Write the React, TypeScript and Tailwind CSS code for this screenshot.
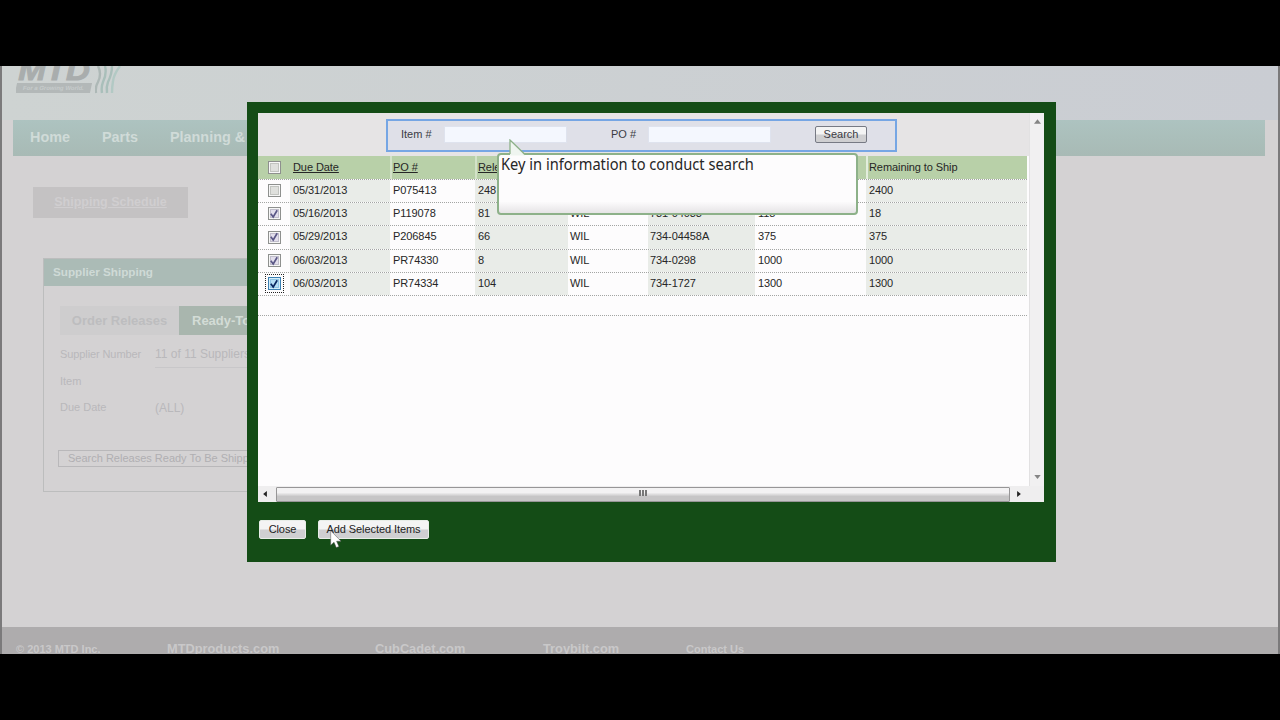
import React, { useState } from 'react';

interface Release {
    dueDate: string;
    po: string;
    release: string;
    plant: string;
    item: string;
    quantity: string;
    remaining: string;
    height: string;
}

const releases: Release[] = [
    { dueDate: '05/31/2013', po: 'P075413', release: '248', plant: '', item: '', quantity: '', remaining: '2400', height: 'h-[23px]' },
    { dueDate: '05/16/2013', po: 'P119078', release: '81', plant: 'WIL', item: '731-04033', quantity: '118', remaining: '18', height: 'h-[23px]' },
    { dueDate: '05/29/2013', po: 'P206845', release: '66', plant: 'WIL', item: '734-04458A', quantity: '375', remaining: '375', height: 'h-6' },
    { dueDate: '06/03/2013', po: 'PR74330', release: '8', plant: 'WIL', item: '734-0298', quantity: '1000', remaining: '1000', height: 'h-[23px]' },
    { dueDate: '06/03/2013', po: 'PR74334', release: '104', plant: 'WIL', item: '734-1727', quantity: '1300', remaining: '1300', height: 'h-[23px]' },
];

const columns = 'grid grid-cols-[32px_100px_85px_93px_80px_107px_111px_161px]';

const Checkbox: React.FC<{ checked: boolean; focused?: boolean; onClick: () => void }> = ({ checked, focused, onClick }) => (
    <button
        type="button"
        onClick={onClick}
        className={`flex h-[19px] w-[19px] items-center justify-center ${focused ? 'outline-1 -outline-offset-1 outline-dotted outline-[#222]' : ''}`}
    >
        <span className={`flex h-[13px] w-[13px] items-center justify-center border p-px ${focused ? 'border-[#3c7fb1] bg-[#d3edfa]' : 'border-[#8e908e] bg-[#f6f6f6]'}`}>
            <span className={`flex h-[9px] w-[9px] items-center justify-center border ${focused ? 'border-[#8fc4e6] bg-[#b5def5]' : checked ? 'border-[#c0bdcb] bg-[#e2deec]' : 'border-[#c2c4c0] bg-[#dfe0dd]'}`}>
                {checked && (
                    <svg viewBox="0 0 10 10" className={`h-[10px] w-[10px] shrink-0 ${focused ? 'text-[#08265f]' : 'text-[#5a5786]'}`}>
                        <path d="M1.8 4.8 4.2 8 8.2 1.2" fill="none" stroke="currentColor" strokeWidth="1.7" />
                    </svg>
                )}
            </span>
        </span>
    </button>
);

const PushButton: React.FC<{ children: React.ReactNode; className: string }> = ({ children, className }) => (
    <button
        type="button"
        className={`flex items-center justify-center rounded-[2px] border bg-linear-to-b from-[#f4f4f4] from-45% to-[#cfcfd1] to-55% whitespace-nowrap ${className}`}
    >
        {children}
    </button>
);

const Logo: React.FC = () => (
    <div className="flex h-[28px] overflow-hidden">
        <div className="w-[79px]">
            <div className="-mt-[8px] h-[25px] origin-left scale-x-[1.14] pl-[2px] text-[29px] leading-[24px] font-bold text-[#a9adad] italic [-webkit-text-stroke:1px_#a9adad]">MTD</div>
            <div className="h-[10px] w-[75px] -skew-x-12 bg-[#b3b8b8] text-center text-[6px] leading-[10px] font-bold text-[#c6cbcb]">For a Growing World.</div>
        </div>
        <svg viewBox="0 0 28 28" className="h-[28px] w-[28px]">
            <g fill="none" strokeWidth="2.4">
                <path d="M3 0Q7 8 3 16Q0 21 1 27" stroke="#adb8b6" />
                <path d="M10 0Q12 8 8 16Q6 21 7 27" stroke="#a9bfba" />
                <path d="M17 0Q17 8 13 16Q11 21 12 27" stroke="#a9bfba" />
                <path d="M25 0Q19 8 18 15Q17 21 17 27" stroke="#b2c9c4" />
            </g>
        </svg>
    </div>
);

const BackgroundPage: React.FC = () => (
    <div className="flex h-full flex-col">
        <div className="h-[54px] bg-linear-to-r from-[#ced3d2] to-[#cacdd3] pl-[16px]">
            <Logo />
        </div>
        <nav className="mr-[15px] ml-[13px] flex h-[36px] items-center gap-[32px] bg-linear-to-b from-[#adc3c0] to-[#a8bab5] pl-[17px] text-[14.4px] font-bold text-[#d0dbd8]">
            <span>Home</span>
            <span>Parts</span>
            <span className="whitespace-nowrap">Planning &amp;</span>
        </nav>
        <div className="mt-[31px] ml-[33px] flex h-[31px] w-[155px] items-center justify-center bg-[#c4c2c3] text-[12.5px] font-bold text-[#d0ced0] underline">
            Shipping Schedule
        </div>
        <section className="mt-[40px] ml-[43px] h-[234px] w-[620px] border border-[#bcbdbd]">
            <div className="flex h-[27px] items-center bg-[#abbbb6] pb-[2px] pl-[9px] text-[11.7px] font-bold text-[#cfdad6]">Supplier Shipping</div>
            <div className="pl-[16px] text-[11px] text-[#b9b8bb]">
                <div className="mt-[20px] flex h-[29px] text-[13px] font-bold">
                    <span className="flex w-[119px] items-center justify-center bg-[#cecdce] text-[#bdbdbf]">Order Releases</span>
                    <span className="flex w-[150px] items-center bg-[#a9b6ae] pl-[13px] text-[#d3dcd6]">Ready-To-Ship</span>
                </div>
                <div className="mt-[6px] flex h-[27px] items-center">
                    <span className="w-[95px] tracking-[-0.1px]">Supplier Number</span>
                    <span className="flex h-full w-[200px] items-center border-b border-[#c8c7c9] text-[12px]">11 of 11 Suppliers</span>
                </div>
                <div className="flex h-[26px] items-center">Item</div>
                <div className="flex h-[27px] items-center">
                    <span className="w-[95px]">Due Date</span>
                    <span className="text-[12px]">(ALL)</span>
                </div>
                <div className="mt-[29px] -ml-[2px] flex h-[17px] w-[220px] items-center border border-[#b9b8ba] pl-[9px] text-[11px] whitespace-nowrap text-[#b0afb2]">
                    Search Releases Ready To Be Shipped
                </div>
            </div>
        </section>
        <footer className="mt-auto flex h-[27px] bg-[#aeacad] pt-[13px] pl-[16px] text-[12.8px] leading-[18px] font-bold text-[#c9c8c9]">
            <span className="w-[151px] text-[11px]">© 2013 MTD Inc.</span>
            <span className="w-[208px]">MTDproducts.com</span>
            <span className="w-[168px]">CubCadet.com</span>
            <span className="w-[143px]">Troybilt.com</span>
            <span className="text-[11px]">Contact Us</span>
        </footer>
    </div>
);

const SearchBar: React.FC = () => (
    <div className="flex h-[43px] w-[771px] bg-[#e6e4e5] pt-[6px] pl-[128px]">
        <div className="flex h-[33px] w-[511px] items-center border-2 border-[#76a6e4] bg-[#dfe0e8] pb-[2px] pl-[13px] text-[#3c3c44]">
            <label className="w-[43px]">Item #</label>
            <input className="h-[17px] w-[123px] border border-[#dfe3ee] bg-[#f4f7fe]" />
            <label className="ml-[44px] w-[37px]">PO #</label>
            <input className="h-[17px] w-[123px] border border-[#dfe3ee] bg-[#f4f7fe]" />
            <PushButton className="ml-[44px] h-[17px] w-[52px] border-[#777a84]">Search</PushButton>
        </div>
    </div>
);

const ReleaseTable: React.FC = () => {
    const [selected, setSelected] = useState<boolean[]>([false, true, true, true, true]);

    const toggle = (index: number) => {
        setSelected(prev => prev.map((value, i) => (i === index ? !value : value)));
    };

    return (
        <div className="w-[769px] tracking-[-0.08px] text-[#262626]">
            <div className={`${columns} h-[23px] items-stretch bg-[#b8d0a8] leading-[22px]`}>
                <div className="flex items-center justify-center">
                    <Checkbox checked={selected.every(Boolean)} onClick={() => setSelected(releases.map(() => true))} />
                </div>
                <div className="pl-[3px] underline">Due Date</div>
                <div className="border-l-2 border-[#d3e2c8] pl-[1px] underline">PO #</div>
                <div className="border-l-2 border-[#d3e2c8] pl-[1px] underline">Rele</div>
                <div className="border-l-2 border-[#d3e2c8]" />
                <div className="border-l-2 border-[#d3e2c8]" />
                <div className="border-l-2 border-[#d3e2c8]" />
                <div className="border-l-2 border-[#e3eddc] pl-[1px]">Remaining to Ship</div>
            </div>
            {releases.map((row, index) => (
                <div key={index} className={`${columns} ${row.height} border-t border-dotted border-[#a3a5a3] leading-[20px]`}>
                    <div className="flex items-center justify-center pb-px">
                        <Checkbox checked={selected[index]} focused={index === 4} onClick={() => toggle(index)} />
                    </div>
                    <div className="bg-[#e9ece8] pl-[3px]">{row.dueDate}</div>
                    <div className="pl-[3px]">{row.po}</div>
                    <div className="bg-[#e9ece8] pl-[3px]">{row.release}</div>
                    <div className="pl-[2px]">{row.plant}</div>
                    <div className="bg-[#e9ece8] pl-[2px]">{row.item}</div>
                    <div className="pl-[3px]">{row.quantity}</div>
                    <div className="bg-[#e9ece8] pl-[3px]">{row.remaining}</div>
                </div>
            ))}
            <div className="h-[21px] border-y border-dotted border-[#a3a5a3]" />
        </div>
    );
};

const Callout: React.FC = () => (
    <div className="absolute top-[139px] left-[497px] h-[76px] w-[361px]">
        <div className="mt-[14px] h-[62px] rounded-[4px] border-2 border-[#8db189] bg-linear-to-b from-[#fdfcfd] from-80% to-[#e6e4e6] pl-[2px] whitespace-nowrap text-[#262626]">
            <div className="w-max origin-left scale-x-[0.915] font-['Noto_Sans'] text-[16px] leading-[19px]">
                Key in information to conduct search
            </div>
        </div>
        <svg viewBox="0 0 20 17" className="absolute top-0 left-[12px] h-[17px] w-[20px]">
            <path d="M1 16.5V1L16 16.5Z" fill="#eff5f0" />
            <path d="M1 15V1L15.5 15" fill="none" stroke="#8db189" strokeWidth="1.3" />
        </svg>
    </div>
);

const ReleaseDialog: React.FC = () => (
    <div className="absolute top-[102px] left-[247px] h-[460px] w-[809px] bg-[#144c16] p-[11px] text-[11px]">
        <div className="flex h-[389px] w-[786px] flex-col bg-[#fdfcfd]">
            <div className="flex flex-1">
                <div className="w-[771px]">
                    <SearchBar />
                    <ReleaseTable />
                </div>
                <div className="flex flex-1 flex-col items-center justify-between border-l border-[#e2e1e2] bg-[#f1f0f1] pt-[6px] pb-[7px]">
                    <svg viewBox="0 0 8 5" className="h-[5px] w-[7px]"><path d="M4 0 8 5H0Z" fill="#858585" /></svg>
                    <svg viewBox="0 0 8 5" className="h-[4px] w-[7px]"><path d="M0 0H8L4 5Z" fill="#858585" /></svg>
                </div>
            </div>
            <div className="flex h-[16px] items-center bg-[#efeeef]">
                <svg viewBox="0 0 5 8" className="mr-[9px] ml-[5px] h-[6px] w-[4px]"><path d="M5 0V8L0 4Z" fill="#222" /></svg>
                <div className="flex h-[15px] w-[734px] items-center justify-center gap-px rounded-[1px] border border-[#979697] bg-linear-to-b from-[#f3f2f3] from-35% to-[#c6c5c6] to-65% pb-[2px]">
                    <span className="h-[6px] w-[2px] bg-[#777]" />
                    <span className="h-[6px] w-[2px] bg-[#777]" />
                    <span className="h-[6px] w-[2px] bg-[#777]" />
                </div>
                <svg viewBox="0 0 5 8" className="ml-[7px] h-[6px] w-[4px]"><path d="M0 0V8L5 4Z" fill="#222" /></svg>
            </div>
        </div>
        <div className="mt-[18px] ml-px flex gap-3 tracking-[-0.08px] text-[#222]">
            <PushButton className="h-[19px] w-[47px] border-[#e8ede8]">Close</PushButton>
            <PushButton className="h-[19px] w-[111px] border-[#e8ede8]">Add Selected Items</PushButton>
        </div>
    </div>
);

const App: React.FC = () => (
    <div className="relative h-[720px] w-[1280px] overflow-hidden bg-black py-[66px] font-['Liberation_Sans',sans-serif]">
        <div className="h-[588px] overflow-hidden border-x-2 border-[#7b7a7b] bg-[#d4d2d3]">
            <div className="-mx-[2px] h-full">
                <BackgroundPage />
            </div>
        </div>
        <ReleaseDialog />
        <Callout />
        <svg viewBox="0 0 12 19" className="absolute top-[530px] left-[330px] h-[19px] w-[12px]">
            <path d="M.7.8V15.2L4 12.2 6.3 17.6 8.9 16.5 6.6 11.2H11.1Z" fill="#fff" stroke="#555" strokeWidth=".5" />
        </svg>
    </div>
);

export default App;
